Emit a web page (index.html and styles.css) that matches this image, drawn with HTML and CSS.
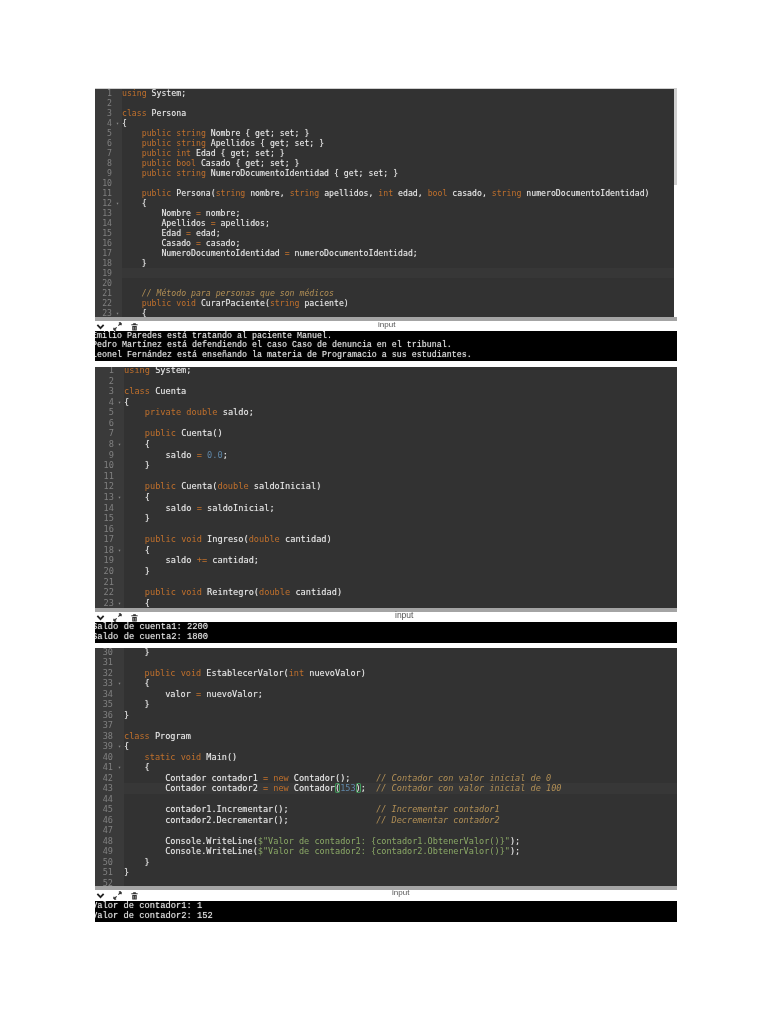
FILE: index.html
```html
<!DOCTYPE html>
<html lang="es">
<head>
<meta charset="utf-8">
<title>Capturas de código C#</title>
<link rel="stylesheet" href="styles.css">
</head>
<body>
<main class="page">
<section class="shot shot-a">
<div class="editor">
<div class="lines"><div class="row"><span class="ln">1</span><span class="code"><b>using</b> System;</span></div>
<div class="row"><span class="ln">2</span><span class="code"></span></div>
<div class="row"><span class="ln">3</span><span class="code"><b>class</b> Persona</span></div>
<div class="row"><span class="ln">4<i>▾</i></span><span class="code">{</span></div>
<div class="row"><span class="ln">5</span><span class="code">    <b>public</b> <b>string</b> Nombre { get; set; }</span></div>
<div class="row"><span class="ln">6</span><span class="code">    <b>public</b> <b>string</b> Apellidos { get; set; }</span></div>
<div class="row"><span class="ln">7</span><span class="code">    <b>public</b> <b>int</b> Edad { get; set; }</span></div>
<div class="row"><span class="ln">8</span><span class="code">    <b>public</b> <b>bool</b> Casado { get; set; }</span></div>
<div class="row"><span class="ln">9</span><span class="code">    <b>public</b> <b>string</b> NumeroDocumentoIdentidad { get; set; }</span></div>
<div class="row"><span class="ln">10</span><span class="code"></span></div>
<div class="row"><span class="ln">11</span><span class="code">    <b>public</b> Persona(<b>string</b> nombre, <b>string</b> apellidos, <b>int</b> edad, <b>bool</b> casado, <b>string</b> numeroDocumentoIdentidad)</span></div>
<div class="row"><span class="ln">12<i>▾</i></span><span class="code">    {</span></div>
<div class="row"><span class="ln">13</span><span class="code">        Nombre <b>=</b> nombre;</span></div>
<div class="row"><span class="ln">14</span><span class="code">        Apellidos <b>=</b> apellidos;</span></div>
<div class="row"><span class="ln">15</span><span class="code">        Edad <b>=</b> edad;</span></div>
<div class="row"><span class="ln">16</span><span class="code">        Casado <b>=</b> casado;</span></div>
<div class="row"><span class="ln">17</span><span class="code">        NumeroDocumentoIdentidad <b>=</b> numeroDocumentoIdentidad;</span></div>
<div class="row"><span class="ln">18</span><span class="code">    }</span></div>
<div class="row active"><span class="ln">19</span><span class="code"></span></div>
<div class="row"><span class="ln">20</span><span class="code"></span></div>
<div class="row"><span class="ln">21</span><span class="code">    <em>// Método para personas que son médicos</em></span></div>
<div class="row"><span class="ln">22</span><span class="code">    <b>public</b> <b>void</b> CurarPaciente(<b>string</b> paciente)</span></div>
<div class="row"><span class="ln">23<i>▾</i></span><span class="code">    {</span></div></div>
<div class="scrollbar"></div>
</div>
<div class="toolbar">
<span class="tools">
<svg class="tool" viewBox="0 0 10 10"><path d="M1.5 3.2 5 6.8 8.5 3.2" fill="none" stroke="#222" stroke-width="2"/></svg>
<svg class="tool" viewBox="0 0 10 10"><path d="M1 9 4 6M6 4 9 1M1 9V6.5M1 9h2.5M9 1v2.5M9 1H6.5" fill="none" stroke="#333" stroke-width="1.4"/></svg>
<svg class="tool" viewBox="0 0 10 10"><path d="M3.5 1.5h3v1h2v1.2h-7V2.500h2zM2.500 4.500h5V9.500h-5z" fill="#333"/><path d="M4 5.500v3M6 5.500v3" stroke="#ccc" stroke-width=".6"/></svg>
</span>
<span class="label">input</span>
</div>
<div class="console"><pre class="out">Emilio Paredes está tratando al paciente Manuel.
Pedro Martínez está defendiendo el caso Caso de denuncia en el tribunal.
Leonel Fernández está enseñando la materia de Programacio a sus estudiantes.</pre></div>
</section>

<section class="shot shot-b">
<div class="editor">
<div class="lines"><div class="row"><span class="ln">1</span><span class="code"><b>using</b> System;</span></div>
<div class="row"><span class="ln">2</span><span class="code"></span></div>
<div class="row"><span class="ln">3</span><span class="code"><b>class</b> Cuenta</span></div>
<div class="row"><span class="ln">4<i>▾</i></span><span class="code">{</span></div>
<div class="row"><span class="ln">5</span><span class="code">    <b>private</b> <b>double</b> saldo;</span></div>
<div class="row"><span class="ln">6</span><span class="code"></span></div>
<div class="row"><span class="ln">7</span><span class="code">    <b>public</b> Cuenta()</span></div>
<div class="row"><span class="ln">8<i>▾</i></span><span class="code">    {</span></div>
<div class="row"><span class="ln">9</span><span class="code">        saldo <b>=</b> <u>0.0</u>;</span></div>
<div class="row"><span class="ln">10</span><span class="code">    }</span></div>
<div class="row"><span class="ln">11</span><span class="code"></span></div>
<div class="row"><span class="ln">12</span><span class="code">    <b>public</b> Cuenta(<b>double</b> saldoInicial)</span></div>
<div class="row"><span class="ln">13<i>▾</i></span><span class="code">    {</span></div>
<div class="row"><span class="ln">14</span><span class="code">        saldo <b>=</b> saldoInicial;</span></div>
<div class="row"><span class="ln">15</span><span class="code">    }</span></div>
<div class="row"><span class="ln">16</span><span class="code"></span></div>
<div class="row"><span class="ln">17</span><span class="code">    <b>public</b> <b>void</b> Ingreso(<b>double</b> cantidad)</span></div>
<div class="row"><span class="ln">18<i>▾</i></span><span class="code">    {</span></div>
<div class="row"><span class="ln">19</span><span class="code">        saldo <b>+=</b> cantidad;</span></div>
<div class="row"><span class="ln">20</span><span class="code">    }</span></div>
<div class="row"><span class="ln">21</span><span class="code"></span></div>
<div class="row"><span class="ln">22</span><span class="code">    <b>public</b> <b>void</b> Reintegro(<b>double</b> cantidad)</span></div>
<div class="row"><span class="ln">23<i>▾</i></span><span class="code">    {</span></div></div>
</div>
<div class="toolbar">
<span class="tools">
<svg class="tool" viewBox="0 0 10 10"><path d="M1.5 3.2 5 6.8 8.5 3.2" fill="none" stroke="#222" stroke-width="2"/></svg>
<svg class="tool" viewBox="0 0 10 10"><path d="M1 9 4 6M6 4 9 1M1 9V6.5M1 9h2.5M9 1v2.5M9 1H6.5" fill="none" stroke="#333" stroke-width="1.4"/></svg>
<svg class="tool" viewBox="0 0 10 10"><path d="M3.5 1.5h3v1h2v1.2h-7V2.500h2zM2.500 4.500h5V9.500h-5z" fill="#333"/><path d="M4 5.500v3M6 5.500v3" stroke="#ccc" stroke-width=".6"/></svg>
</span>
<span class="label">input</span>
</div>
<div class="console"><pre class="out">Saldo de cuenta1: 2200
Saldo de cuenta2: 1800</pre></div>
</section>

<section class="shot shot-c">
<div class="editor">
<div class="lines"><div class="row"><span class="ln">30</span><span class="code">    }</span></div>
<div class="row"><span class="ln">31</span><span class="code"></span></div>
<div class="row"><span class="ln">32</span><span class="code">    <b>public</b> <b>void</b> EstablecerValor(<b>int</b> nuevoValor)</span></div>
<div class="row"><span class="ln">33<i>▾</i></span><span class="code">    {</span></div>
<div class="row"><span class="ln">34</span><span class="code">        valor <b>=</b> nuevoValor;</span></div>
<div class="row"><span class="ln">35</span><span class="code">    }</span></div>
<div class="row"><span class="ln">36</span><span class="code">}</span></div>
<div class="row"><span class="ln">37</span><span class="code"></span></div>
<div class="row"><span class="ln">38</span><span class="code"><b>class</b> Program</span></div>
<div class="row"><span class="ln">39<i>▾</i></span><span class="code">{</span></div>
<div class="row"><span class="ln">40</span><span class="code">    <b>static</b> <b>void</b> Main()</span></div>
<div class="row"><span class="ln">41<i>▾</i></span><span class="code">    {</span></div>
<div class="row"><span class="ln">42</span><span class="code">        Contador contador1 <b>=</b> <b>new</b> Contador();     <em>// Contador con valor inicial de 0</em></span></div>
<div class="row active"><span class="ln">43</span><span class="code">        Contador contador2 <b>=</b> <b>new</b> Contador<s>(</s><u>153</u><s>)</s>;  <em>// Contador con valor inicial de 100</em></span></div>
<div class="row"><span class="ln">44</span><span class="code"></span></div>
<div class="row"><span class="ln">45</span><span class="code">        contador1.Incrementar();                 <em>// Incrementar contador1</em></span></div>
<div class="row"><span class="ln">46</span><span class="code">        contador2.Decrementar();                 <em>// Decrementar contador2</em></span></div>
<div class="row"><span class="ln">47</span><span class="code"></span></div>
<div class="row"><span class="ln">48</span><span class="code">        Console.WriteLine(<q>$"Valor de contador1: {contador1.ObtenerValor()}"</q>);</span></div>
<div class="row"><span class="ln">49</span><span class="code">        Console.WriteLine(<q>$"Valor de contador2: {contador2.ObtenerValor()}"</q>);</span></div>
<div class="row"><span class="ln">50</span><span class="code">    }</span></div>
<div class="row"><span class="ln">51</span><span class="code">}</span></div>
<div class="row"><span class="ln">52</span><span class="code"></span></div></div>
</div>
<div class="toolbar">
<span class="tools">
<svg class="tool" viewBox="0 0 10 10"><path d="M1.5 3.2 5 6.8 8.5 3.2" fill="none" stroke="#222" stroke-width="2"/></svg>
<svg class="tool" viewBox="0 0 10 10"><path d="M1 9 4 6M6 4 9 1M1 9V6.5M1 9h2.5M9 1v2.5M9 1H6.5" fill="none" stroke="#333" stroke-width="1.4"/></svg>
<svg class="tool" viewBox="0 0 10 10"><path d="M3.5 1.5h3v1h2v1.2h-7V2.500h2zM2.500 4.500h5V9.500h-5z" fill="#333"/><path d="M4 5.500v3M6 5.500v3" stroke="#ccc" stroke-width=".6"/></svg>
</span>
<span class="label">input</span>
</div>
<div class="console"><pre class="out">Valor de contador1: 1
Valor de contador2: 152</pre></div>
</section>
</main>
</body>
</html>
```
FILE: styles.css
```css
* { box-sizing: border-box; }
html, body { margin: 0; background: #fff; }
.page {
  width: 768px;
  height: 1024px;
  padding: 88px 91px 0 95px;
  overflow: hidden;
  display: flex;
  flex-direction: column;
}
.shot { display: flex; flex-direction: column; flex: none; width: 582px; }
.shot-a { height: 273px; margin-bottom: 6px; }
.shot-b { height: 276px; margin-bottom: 5px; }
.shot-c { height: 274px; }

.editor {
  flex: 1;
  min-height: 0;
  display: flex;
  background: #323232;
  border-bottom: 4px solid #a4a4a4;
  overflow: hidden;
}
.shot-a .editor { border-top: 1px solid #cfcfcf; }
.lines { flex: 1; min-width: 0; filter: blur(.3px); }
.shot-a .lines { margin-top: -1px; }
.shot-b .lines { margin-top: -2px; }
.shot-c .lines { margin-top: -1.25px; }
.scrollbar { flex: none; width: 3px; background: #fff; }
.scrollbar::before { content: ""; display: block; height: 96px; background: #cfcfcf; }

.row {
  display: flex;
  height: 10px;
  font: 8.2px/10px "DejaVu Sans Mono", monospace;
  color: #ececec;
  text-shadow: 0 0 1px rgba(255, 255, 255, .35);
}
.shot-b .row { height: 10.58px; font-size: 8.65px; line-height: 10.58px; }
.shot-c .row { height: 10.5px; font-size: 8.55px; line-height: 10.5px; }
.row.active { background: #373737; }
.ln {
  width: 27px;
  flex: none;
  padding-right: 10px;
  text-align: right;
  color: #808080;
  background: #3a3a3a;
  position: relative;
  text-shadow: none;
}
.shot-b .ln { width: 29px; }
.shot-c .ln { width: 29px; padding-right: 11px; }
.ln i {
  position: absolute;
  right: 3px;
  font-style: normal;
  font-size: 5px;
  color: #888;
}
.code { white-space: pre; }
.code b { font-weight: 400; color: #c0702c; text-shadow: none; }
.code em { color: #b08e55; text-shadow: none; }
.code u { text-decoration: none; color: #5f87a8; text-shadow: none; }
.code q { quotes: none; color: #8aa866; text-shadow: none; }
.code s {
  text-decoration: none;
  box-shadow: inset 0 0 0 1px #3f9a5a;
  border-radius: 2px;
}

.toolbar {
  flex: none;
  height: 10px;
  display: flex;
  align-items: center;
  background: #fff;
  position: relative;
}
.shot-c .toolbar { height: 11px; }
.tools { display: flex; gap: 8px; padding-left: 1px; filter: blur(.3px); }
.tool { width: 9px; height: 9px; display: block; }
.label {
  position: absolute;
  top: -1px;
  font: 8px/10px "Liberation Sans", sans-serif;
  color: #555;
  filter: blur(.3px);
}
.shot-a .label { left: 283px; }
.shot-b .label { left: 300px; top: -2px; font-size: 8.5px; }
.shot-c .label { left: 297px; top: -2px; }

.console {
  flex: none;
  background: #000;
  overflow: hidden;
}
.shot-a .console { height: 30px; }
.shot-b .console, .shot-c .console { height: 21px; }
.out {
  margin: 0 0 0 -3px;
  padding-top: 1px;
  color: #e4e4e4;
  font: 400 8.33px/9.4px "Liberation Mono", monospace;
  white-space: pre;
  text-shadow: 0 0 1px rgba(255, 255, 255, .5);
  filter: blur(.3px);
}
.shot-b .out { padding-top: 0; font-size: 8.8px; line-height: 10px; }
.shot-c .out { padding-top: 0; font-size: 8.75px; line-height: 10px; }
```
